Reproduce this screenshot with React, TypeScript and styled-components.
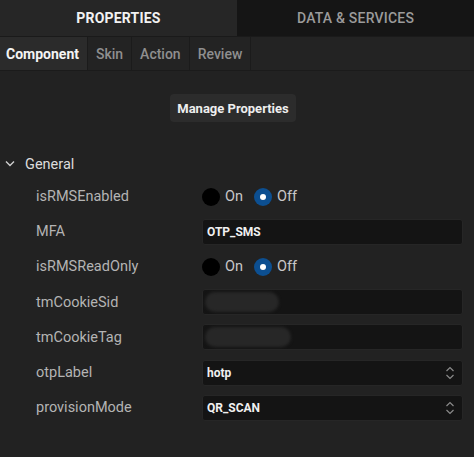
import React from "react"
import styled, { createGlobalStyle } from "styled-components"

const GlobalStyle = createGlobalStyle`
  html, body {
    margin: 0;
    padding: 0;
    background: #222222;
    font-family: Roboto, "Liberation Sans", sans-serif;
  }
`

const Panel = styled.div`
  width: 474px;
  height: 457px;
  background: #222222;
  overflow: hidden;
`

const TopTabs = styled.div`
  display: flex;
  height: 36px;
`

const TopTab = styled.div<{ active?: boolean }>`
  flex: 1;
  display: flex;
  align-items: center;
  justify-content: center;
  background: ${(p) => (p.active ? "#262626" : "#151515")};
  color: ${(p) => (p.active ? "#f2f2f2" : "#9b9b9b")};
  font-size: 14px;
  font-weight: ${(p) => (p.active ? 700 : 500)};
  letter-spacing: 0.2px;
`

const SubTabs = styled.div`
  display: flex;
  height: 33px;
  background: #232323;
  border-top: 1px solid #1a1a1a;
  border-bottom: 1px solid #1b1b1b;
`

const SubTab = styled.div<{ active?: boolean }>`
  display: flex;
  align-items: center;
  padding: 0 8px 0 ${(p) => (p.active ? "6px" : "8px")};
  background: ${(p) => (p.active ? "#2b2b2b" : "#232323")};
  color: ${(p) => (p.active ? "#f4f4f4" : "#8f8f8f")};
  font-size: 14px;
  font-weight: ${(p) => (p.active ? 700 : 500)};
  border-right: 1px solid #1b1b1b;
`

const ButtonRow = styled.div`
  display: flex;
  justify-content: center;
  padding-top: 23px;
  padding-right: 8px;
`

const ManageButton = styled.div`
  height: 28px;
  padding: 0 7px;
  display: flex;
  align-items: center;
  background: #2c2c2c;
  border-radius: 4px;
  color: #eeeeee;
  font-size: 13px;
  font-weight: 700;
`

const SectionHeader = styled.div`
  display: flex;
  align-items: center;
  margin-top: 31px;
  padding-left: 5px;
  height: 22px;
  color: #dcdcdc;
  font-size: 14.5px;
  gap: 10px;
`

const Rows = styled.div`
  display: flex;
  flex-direction: column;
  padding: 0 11px 0 36px;
  margin-top: 4px;
`

const Row = styled.div`
  display: flex;
  align-items: center;
  height: 35.2px;
`

const Label = styled.div`
  width: 166px;
  color: #b4b4b4;
  font-size: 14.5px;
`

const RadioGroup = styled.div`
  display: flex;
  align-items: center;
  color: #c8c8c8;
  font-size: 14.5px;
`

const RadioOption = styled.div`
  display: flex;
  align-items: center;
  margin-right: 11px;
  gap: 5px;
`

const RadioCircle = styled.div<{ checked?: boolean }>`
  width: 18px;
  height: 18px;
  border-radius: 50%;
  background: ${(p) => (p.checked ? "#0c4f91" : "#000000")};
  display: flex;
  align-items: center;
  justify-content: center;

  &::after {
    content: "";
    display: ${(p) => (p.checked ? "block" : "none")};
    width: 6px;
    height: 6px;
    border-radius: 50%;
    background: #ffffff;
  }
`

const Field = styled.div`
  flex: 1;
  height: 26px;
  box-sizing: border-box;
  background: #141414;
  border: 1px solid #262626;
  border-radius: 3px;
  display: flex;
  align-items: center;
  justify-content: space-between;
  padding: 0 7px 0 4px;
  color: #f0f0f0;
  font-size: 12px;
  font-weight: 700;
  position: relative;
  overflow: hidden;
`

const Blur = styled.div<{ w: number }>`
  position: absolute;
  left: 2px;
  top: 2px;
  height: 20px;
  width: ${(p) => p.w}px;
  border-radius: 10px;
  background: #272727;
  filter: blur(1.5px);
`

const Chevron = () => (
  <svg width="10" height="8" viewBox="0 0 10 8">
    <path d="M1 1.5 L5 5.5 L9 1.5" fill="none" stroke="#cfcfcf" strokeWidth="1.4" />
  </svg>
)

const UpDown = () => (
  <svg width="10" height="14" viewBox="0 0 10 14">
    <path d="M1.5 5 L5 1.5 L8.5 5 M1.5 9 L5 12.5 L8.5 9" fill="none" stroke="#8a8a8a" strokeWidth="1.2" />
  </svg>
)

const Radio = () => (
  <RadioGroup>
    <RadioOption>
      <RadioCircle />
      On
    </RadioOption>
    <RadioOption>
      <RadioCircle checked />
      Off
    </RadioOption>
  </RadioGroup>
)

const App = () => {
  return (
    <Panel>
      <GlobalStyle />
      <TopTabs>
        <TopTab active>PROPERTIES</TopTab>
        <TopTab>DATA &amp; SERVICES</TopTab>
      </TopTabs>
      <SubTabs>
        <SubTab active>Component</SubTab>
        <SubTab>Skin</SubTab>
        <SubTab>Action</SubTab>
        <SubTab>Review</SubTab>
      </SubTabs>
      <ButtonRow>
        <ManageButton>Manage Properties</ManageButton>
      </ButtonRow>
      <SectionHeader>
        <Chevron />
        General
      </SectionHeader>
      <Rows>
        <Row>
          <Label>isRMSEnabled</Label>
          <Radio />
        </Row>
        <Row>
          <Label>MFA</Label>
          <Field>OTP_SMS</Field>
        </Row>
        <Row>
          <Label>isRMSReadOnly</Label>
          <Radio />
        </Row>
        <Row>
          <Label>tmCookieSid</Label>
          <Field>
            <Blur w={74} />
          </Field>
        </Row>
        <Row>
          <Label>tmCookieTag</Label>
          <Field>
            <Blur w={86} />
          </Field>
        </Row>
        <Row>
          <Label>otpLabel</Label>
          <Field>
            hotp
            <UpDown />
          </Field>
        </Row>
        <Row>
          <Label>provisionMode</Label>
          <Field>
            QR_SCAN
            <UpDown />
          </Field>
        </Row>
      </Rows>
    </Panel>
  )
}

export default App
